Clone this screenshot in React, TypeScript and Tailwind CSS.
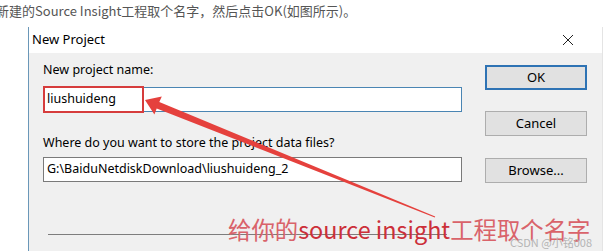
import React from "react";

function CloseIcon() {
  return (
    <svg width="12" height="12" viewBox="0 0 12 12" className="text-[#222]">
      <path d="M1 1 L11 11 M11 1 L1 11" stroke="currentColor" strokeWidth="1" fill="none" />
    </svg>
  );
}

function DialogButton({ label, primary }: { label: string; primary?: boolean }) {
  return (
    <div
      className={
        primary
          ? "flex h-[25px] w-[102px] items-center justify-center border-2 border-[#2e73b4] bg-[#e1e1e1] text-[13px] text-black"
          : "flex h-[25px] w-[102px] items-center justify-center border border-[#adadad] bg-[#e1e1e1] text-[13px] text-black"
      }
    >
      {label}
    </div>
  );
}

export default function App() {
  return (
    <div className="relative h-[251px] w-[603px] overflow-hidden bg-white font-['Noto_Sans','Noto_Sans_CJK_SC',sans-serif]">
      {/* article caption above the screenshot */}
      <p className="ml-[-4px] pt-[1px] text-[13px] leading-[20px] text-[#555] font-['Noto_Sans_CJK_SC',sans-serif]">
        新建的Source Insight工程取个名字，然后点击OK(如图所示)。
      </p>

      {/* dialog */}
      <div className="ml-[28px] mt-[6px] border-l border-[#6a97b8] border-r border-r-[#e4e4e4]">
        <div className="flex h-[26px] items-center justify-between bg-white pl-[3px] pr-[28px] text-[13px] text-black">
          <span>New Project</span>
          <CloseIcon />
        </div>

        <div className="flex h-[200px] bg-[#f0f0f0] pl-[14px]">
          <div className="flex w-[419px] flex-col pt-[8px]">
            <label className="text-[12.5px] leading-[18px] text-black">New project name:</label>
            <div className="mt-[8px] flex h-[25px] items-center border border-[#4a85b3] bg-white pl-[3px] text-[12.5px] text-black">
              liushuideng
            </div>
            <label className="mt-[22px] text-[12.5px] leading-[18px] text-black">
              Where do you want to store the project data files?
            </label>
            <div className="mt-[5px] flex h-[25px] items-center border border-[#7a7a7a] bg-white pl-[3px] text-[12.5px] text-black">
              G:\BaiduNetdiskDownload\liushuideng_2
            </div>
            <div className="ml-[5px] mt-[52px] h-px w-[399px] bg-[#7d7d7d]" />
          </div>

          <div className="ml-[23px] flex flex-col pt-[12px]">
            <DialogButton label="OK" primary />
            <div className="mt-[21px]">
              <DialogButton label="Cancel" />
            </div>
            <div className="mt-[22px]">
              <DialogButton label="Browse..." />
            </div>
          </div>
        </div>
      </div>

      {/* annotation: red box around the name */}
      <div className="absolute left-[43px] top-[86px] h-[27px] w-[101px] border-2 border-[#d63c3c]" />

      {/* annotation: arrow */}
      <svg className="absolute left-0 top-0" width="603" height="251" viewBox="0 0 603 251">
        <polygon
          points="145,100 161.8,96.4 159.3,102.1 435.2,216.4 434.8,217.6 156.7,108.5 154.4,114.6"
          fill="#e5413d"
        />
      </svg>

      {/* annotation: red text */}
      <div className="absolute left-[228px] top-[213px] whitespace-nowrap text-[23.4px] leading-[32px] font-['Noto_Sans_CJK_SC',sans-serif]">
        <span className="text-[#d9636a]">给你的</span>
        <span className="text-[#cc2f39]">source insight</span>
        <span className="text-[#d9636a]">工程取个名字</span>
      </div>

      {/* watermark */}
      <div className="absolute left-[510px] top-[235px] whitespace-nowrap text-[11px] leading-[14px] text-[#b4b4b4] font-['Noto_Sans_CJK_SC',sans-serif]">
        CSDN @小铭008
      </div>
    </div>
  );
}
